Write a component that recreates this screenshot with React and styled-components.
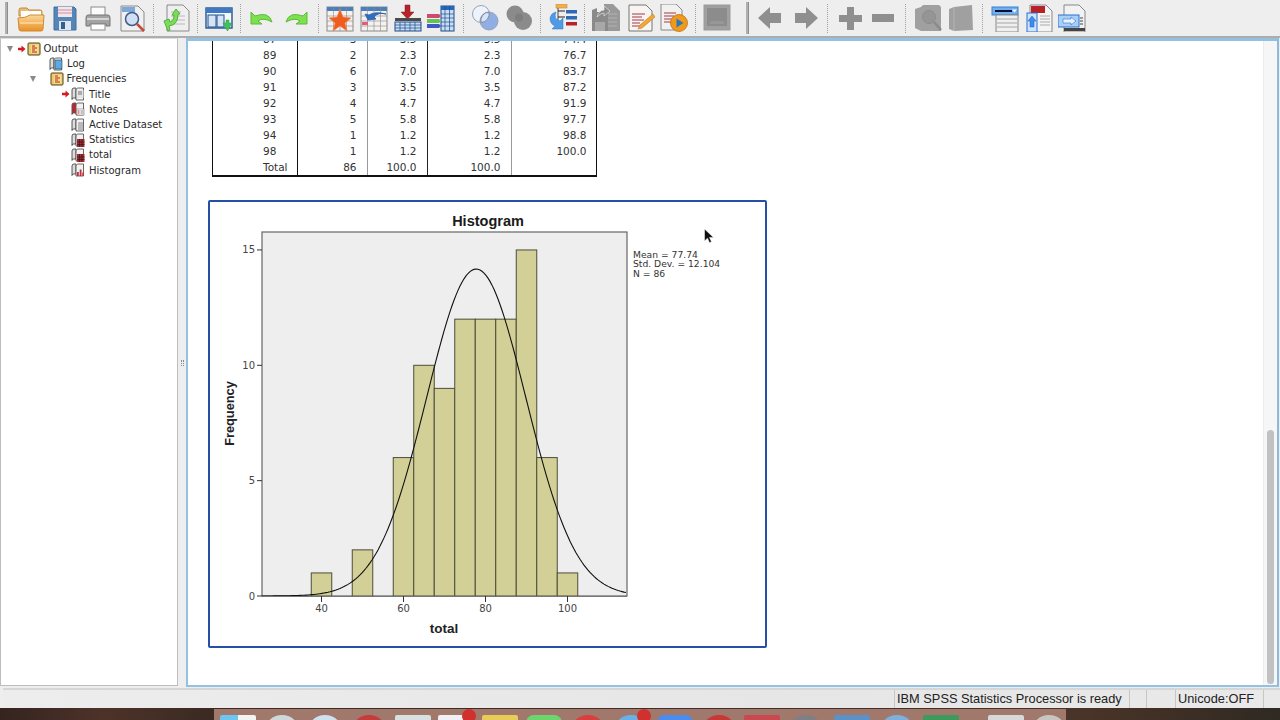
import React from "react";
import styled, { createGlobalStyle } from "styled-components";

const Global = createGlobalStyle`
  html, body { margin: 0; padding: 0; background: #eee; overflow: hidden; }
  * { box-sizing: border-box; }
`;

const Page = styled.div`
  width: 1280px; height: 720px; display: flex; flex-direction: column; overflow: hidden;
  background: #eeeeee; position: relative; font-family: "DejaVu Sans", sans-serif;
`;
const Toolbar = styled.div`
  height: 38px; flex: none; display: flex; align-items: center; background: #eeeeee;
  border-bottom: 2px solid #adadad;
`;
const ToolSlot = styled.div`
  width: 28px; height: 28px; flex: none; margin-left: ${p => p.$gap}px; margin-top: 0;
  svg { display: block; }
`;
const ToolSep = styled.div`
  width: 1px; height: 29px; flex: none; margin-left: ${p => p.$gap}px;
  border-left: 1px dotted #a2a2a2;
`;
const ToolBarGrip = styled.div`
  width: 3px; height: 32px; flex: none; margin-left: ${p => p.$gap}px;
  background: #b0b0b0; border-right: 1px solid #8e8e8e;
`;
const Main = styled.div`flex: 1; min-height: 0; display: flex; align-items: stretch;`;
const Sidebar = styled.div`
  width: 178px; flex: none; background: #fff; border: 1px solid #bdbdbd; border-top-color: #ddd;
  margin-bottom: 2px; padding-top: 2px;
`;
const Splitter = styled.div`
  width: 8px; flex: none; display: flex; align-items: center; justify-content: center;
`;
const SplitDots = styled.div`
  width: 3px; height: 6px; border-left: 1px dotted #888; border-right: 1px dotted #888;
`;
const TreeRow = styled.div`
  height: 15.2px; display: flex; align-items: center; padding-left: ${p => p.$indent}px;
  font-size: 10px; color: #2a2a2a; white-space: nowrap;
`;
const Expander = styled.div`
  width: 11px; flex: none;
  &::before {
    content: ""; display: block; width: 0; height: 0;
    border-left: 3.5px solid transparent; border-right: 3.5px solid transparent; border-top: 6px solid #8a8a8a;
  }
`;
const Marker = styled.div`
  width: 9px; height: 8px; flex: none; svg { display: block; }
`;
const TreeIcon = styled.div`
  width: 14px; height: 14px; flex: none; margin-right: ${p => p.$tight ? 2.5 : 4}px; svg { display: block; }
`;
const Viewer = styled.div`
  flex: 1; min-width: 0; display: flex; background: #fff; border: 2px solid #93c1e2; border-top-width: 3px;
  margin: 0 1px 1px 0; border-right-color: #8db9dc;
`;
const Scroller = styled.div`
  flex: 1; min-width: 0; overflow: hidden; display: flex; flex-direction: column; justify-content: flex-end;
  padding: 0 0 37px 20px; align-items: flex-start;
`;
const ScrollTrack = styled.div`
  width: 14px; flex: none; background: #f6f6f6; border-left: 1px solid #ececec; display: flex;
  justify-content: center; align-items: flex-end; padding-bottom: 1px;
`;
const ScrollThumb = styled.div`
  width: 7px; height: 254px; background: #c1c1c1; border-radius: 4px;
`;
const FreqTable = styled.table`
  border-collapse: separate; border-spacing: 0; margin: 0 0 23px 4px; table-layout: fixed; width: 384.5px;
  border: solid #111; border-width: 0 1.5px 2px 1.5px; font-size: 10.5px; color: #333; flex: none;
  col:nth-child(1) { width: 84.5px; }
  col:nth-child(2) { width: 70px; }
  col:nth-child(3) { width: 60px; }
  col:nth-child(4) { width: 84px; }
`;
const Cell = styled.td`
  height: 16px; padding: 0 10px 0 0; text-align: right; line-height: 16px; white-space: nowrap;
  &:first-child { text-align: left; padding: 0 0 0 50px; border-right: 1.5px solid #111; }
  &:nth-child(2) { border-right: 1.5px solid #999; }
  &:nth-child(3) { border-right: 1px solid #222; }
  &:nth-child(4) { border-right: 1.5px solid #999; }
  &:last-child { padding-right: 9px; }
`;
const ChartFrame = styled.div`
  width: 559px; height: 448px; flex: none; border: 2px solid #2550a6; border-radius: 2px; background: #fff;
  svg { display: block; }
`;
const StatusBar = styled.div`
  height: 21px; flex: none; display: flex; justify-content: flex-end; margin-left: 3px;
  background: linear-gradient(90deg, #ededed, #e6e6e6 60%, #e9e9e9);
  border-top: 2px solid #d6d6d6; border-bottom: 1px solid #f4f4f4;
  font-family: "Liberation Sans", sans-serif; font-size: 12.8px; color: #222;
`;
const StatusCell = styled.div`
  width: ${p => p.$w}px; flex: none; border-left: 1px solid #c6c6c6; padding-left: 2px; line-height: 18px;
  white-space: nowrap; overflow: hidden;
`;
const Desktop = styled.div`
  height: 12px; flex: none; margin-top: -1px; padding: 1px 214px 0; display: flex; overflow: hidden;
  background: linear-gradient(90deg, #35241f, #4d3229 8%, #3a2a22 17%, #4a3328 85%, #2f2a22);
`;
const Dock = styled.div`
  flex: 1; display: flex; background: #a0786c; padding: 6px 0 0 6px; gap: 7.7px; overflow: hidden;
`;
const DockIcon = styled.div`
  width: 36px; height: 36px; flex: none; background: ${p => p.$bg}; margin-left: ${p => p.$ml || 0}px;
  border-radius: ${p => p.$radius}; ${p => p.$ring ? `border: 5px solid ${p.$ring};` : ""}
  position: relative;
`;
const DockBadge = styled.div`
  position: absolute; right: -2px; top: -6px; width: 14px; height: 14px; border-radius: 50%; background: #d0312f;
`;
const Cursor = styled.svg`
  position: absolute; left: 703px; top: 228px; width: 11px; height: 16px;
`;

const Sv = ({ children }) => <svg width="28" height="28" viewBox="0 0 28 28">{children}</svg>;
const Doc = ({ x = 6, y = 2, w = 18, h = 24, fill = "#fff", st = "#8a8a8a" }) => (
  <path d={`M${x} ${y}h${w - 6}l6 6v${h - 6}h${-w}z`} fill={fill} stroke={st} />
);

const IconOpen = () => (<Sv>
  <defs><linearGradient id="og" x1="0" y1="0" x2="0" y2="1"><stop offset="0" stopColor="#fbd89a" /><stop offset="1" stopColor="#ea8f24" /></linearGradient></defs>
  <path d="M2 6q0-2 2-2h6l2 2h11q2 0 2 2v4H2z" fill="#e9bd72" stroke="#c18a3c" />
  <rect x="4" y="7" width="20" height="7" fill="#fff" />
  <path d="M1 14q8 0 12-3h14l-1 14q0 2-2 2H4q-2 0-2-2z" fill="url(#og)" stroke="#cd8a32" />
  <path d="M3 19h23" stroke="#fff0cc" strokeWidth="1.2" opacity=".8" />
</Sv>);
const IconSave = () => (<Sv>
  <path d="M3 3h20l2 2v21H3z" fill="#5486b7" stroke="#3f6e9f" />
  <rect x="7" y="3" width="14" height="10" fill="#f1e6ea" />
  <path d="M7 6h14M7 9h14" stroke="#d98aa0" />
  <rect x="8" y="17" width="12" height="9" fill="#dde6ef" />
  <rect x="10" y="18" width="4" height="7" fill="#33618f" />
</Sv>);
const IconPrint = () => (<Sv>
  <rect x="7" y="3" width="14" height="9" fill="#fbfbfb" stroke="#8b8b8b" />
  <path d="M4 11h20q2 0 2 3v8h-4v-2H6v2H2v-8q0-3 2-3z" fill="#a3a3a3" stroke="#777" />
  <rect x="3" y="14" width="22" height="2" fill="#d5d5d5" />
  <rect x="7" y="20" width="14" height="6" fill="#fff" stroke="#8b8b8b" />
</Sv>);
const IconPreview = () => (<Sv>
  <Doc x={2} y={2} w={23} h={25} fill="#f0f0f0" />
  <rect x="3" y="3" width="13" height="5" fill="#7ea8d8" />
  <circle cx="13" cy="15" r="6.5" fill="#cfe0f4" stroke="#40598a" strokeWidth="1.5" />
  <path d="M18 20l7 7" stroke="#c94a3c" strokeWidth="2.5" />
</Sv>);
const IconGoto = () => (<Sv>
  <Doc x={5} y={1} w={22} h={26} fill="#efefef" />
  <path d="M9 8h10M9 12h14M9 16h14M9 20h14" stroke="#bbb" />
  <path d="M2 17l5-2 1 3q4-1 4-7h-2l4-6 4 5h-2q0 11-9 12l1 4-2 1z" fill="#7fdc5a" stroke="#4fb23a" />
</Sv>);
const IconVars = () => (<Sv>
  <rect x="1" y="4" width="26" height="20" fill="#f4f8fc" stroke="#26548e" strokeWidth="1.4" />
  <rect x="1" y="4" width="26" height="5" fill="#3e79c1" />
  <rect x="3" y="11" width="8" height="12" fill="#d5e5f6" stroke="#1f4f8e" />
  <rect x="12" y="11" width="7" height="12" fill="#d5e5f6" stroke="#1f4f8e" />
  <path d="M19 19h3v-3h3v3h3l-4.500 8z" transform="translate(-1 0)" fill="#3fc25a" stroke="#2a9a42" strokeWidth=".5" />
</Sv>);
const IconUndo = () => (<Sv>
  <path d="M3 12v11h11l-4-3q5-4 14 1q-3-11-17-6l-4-4z" transform="translate(0 -3)" fill="#7fe04f" stroke="#5cba3d" />
</Sv>);
const IconRedo = () => (<Sv>
  <path d="M25 12v11H14l4-3q-5-4-14 1q3-11 17-6l4-4z" transform="translate(0 -3)" fill="#7fe04f" stroke="#5cba3d" />
</Sv>);
const Grid = ({ x = 1, y = 3, w = 26, h = 24, head = "#4a7fbe", line = "#8a8a8a" }) => (<g>
  <rect x={x} y={y} width={w} height={h} fill="#f4f1ee" stroke={line} />
  <rect x={x} y={y} width={w} height={4} fill={head} />
  {[1, 2, 3].map(i => <path key={i} d={`M${x + i * w / 4} ${y}v${h}`} stroke={line} strokeWidth=".6" />)}
  {[1, 2, 3].map(i => <path key={i} d={`M${x} ${y + 4 + i * (h - 4) / 4}h${w}`} stroke={line} strokeWidth=".6" />)}
</g>);
const IconStar = () => (<Sv>
  <Grid />
  <path d="M14 5l3 8 8 1-6 5 2 8-7-5-7 5 2-8-6-5 8-1z" fill="#ef5c1c" stroke="#ee8a55" strokeWidth=".6" />
</Sv>);
const IconCase = () => (<Sv>
  <Grid />
  <rect x="2" y="18" width="6" height="3" fill="#e65a80" />
  <path d="M8 16l-3-6 4 1q6-4 17-1q-8-2-12 3l2 2z" fill="#2e6fc4" stroke="#2e5e9e" strokeWidth=".8" />
</Sv>);
const IconInsert = () => (<Sv>
  <path d="M11 1h5v7h4l-6.500 7-6.500-7h4z" fill="#b5222a" stroke="#8e1c20" strokeWidth=".5" />
  <rect x="1" y="14" width="26" height="3" fill="#4a4a4a" />
  <rect x="1" y="18" width="26" height="9" fill="#c7dcf2" stroke="#1e4a8c" />
  <path d="M1 21h26M1 24h26M6 18v9M11 18v9M16 18v9M21 18v9" stroke="#1e4a8c" strokeWidth=".7" />
</Sv>);
const IconSelect = () => (<Sv>
  <rect x="14" y="2" width="13" height="25" fill="#c9def3" stroke="#1e4a8c" />
  <rect x="14" y="2" width="13" height="4" fill="#2a66ba" />
  <path d="M14 10h13M14 14h13M14 18h13M14 22h13M18 2v25M22.500 2v25" stroke="#1e4a8c" strokeWidth=".7" />
  <path d="M0 10h12l2 2-2 2H0z" fill="#d04a70" />
  <path d="M0 15h12l2 2-2 2H0z" fill="#63c455" />
  <path d="M0 20h12l2 2-2 2H0z" fill="#3f58c4" />
</Sv>);
const IconCircles = () => (<Sv>
  <circle cx="10" cy="10" r="8.500" fill="#eef2fa" stroke="#98a5b8" />
  <circle cx="18" cy="17" r="9" fill="#90aee4" stroke="#98a5b8" />
  <path d="M10 18.500a8.500 8.500 0 0 1 8-10.400a8.500 8.500 0 0 1-8 10.400z" fill="#d9e3f6" stroke="#7a8aa0" />
</Sv>);
const IconCirclesGray = () => (<Sv>
  <circle cx="10" cy="10" r="8.500" fill="#8b8b8b" />
  <circle cx="18" cy="17" r="9" fill="#8b8b8b" />
  <circle cx="14" cy="13.500" r="4" fill="#7e7e7e" />
</Sv>);
const IconTree = () => (<Sv>
  <rect x="7" y="0" width="11" height="4" fill="#f0b050" stroke="#cc8a30" strokeWidth=".6" />
  <path d="M9 4v14" stroke="#444" />
  <rect x="17" y="6" width="11" height="3.500" fill="#2f6bb5" />
  <rect x="17" y="12" width="11" height="3.500" fill="#2f6bb5" />
  <rect x="17" y="18" width="11" height="3.500" fill="#b5222a" />
  <path d="M9 7h7M9 13h7" stroke="#222" strokeWidth="1.200" />
  <path d="M1 14q1-5 6-6q-3 7 4 9l3-3v11h-11l3-3q-5-2-5-8z" fill="#4d9be6" stroke="#2f77c0" strokeWidth=".5" />
</Sv>);
const IconGrayFiles = () => (<Sv>
  <path d="M12 0h9l7 7v20H12z" fill="#999" />
  <path d="M16 10h9M16 14h9M16 18h9M16 22h9" stroke="#b2b2b2" />
  <path d="M0 6l5-2v4l-1 0h12v19H0z" fill="#8a8a8a" />
  <path d="M3 18h10v9H3z" fill="#a8a8a8" />
  <path d="M5 13q2-7 7-7V2l6 5-6 5V9q-3 0-7 4z" fill="#8a8a8a" stroke="#eee" strokeWidth=".6" />
</Sv>);
const IconDocPencil = () => (<Sv>
  <Doc x={2} y={1} w={23} h={26} fill="#f7f4f2" st="#777" />
  <path d="M5 10h13M5 13h10M5 16h12M5 19h8M5 22h11" stroke="#a83a48" strokeWidth="1.100" />
  <path d="M26 10l-13 11-2 4 4-1 13-11z" fill="#f0a838" stroke="#bd7a1c" strokeWidth=".6" />
</Sv>);
const IconDocPlay = () => (<Sv>
  <Doc x={1} y={0} w={21} h={26} fill="#f1f1f1" st="#888" />
  <path d="M4 9h12M4 12h10M4 15h8M4 18h7" stroke="#a83a48" strokeWidth="1.100" />
  <circle cx="19" cy="19" r="8.500" fill="#ef9a1a" stroke="#bf6f10" strokeWidth=".8" />
  <path d="M16.500 14.500l7 4.500-7 4.500z" fill="#2a79c0" />
</Sv>);
const IconScreen = () => (<Sv>
  <rect x="1" y="1" width="26" height="25" fill="#a0a0a0" stroke="#9a9a9a" />
  <rect x="4" y="4" width="20" height="18" fill="#8c8c8c" />
  <path d="M6 20h16l-2-3h-12z" fill="#979797" />
</Sv>);
const IconLeft = () => (<Sv><path d="M1 18L13 7v6h11v10H13v6z" transform="translate(0 -4)" fill="#8f8f8f" /></Sv>);
const IconRight = () => (<Sv><path d="M27 18L15 7v6H4v10h11v6z" transform="translate(0 -4)" fill="#8f8f8f" /></Sv>);
const IconPlus = () => (<Sv><path d="M11 3h7v8h8v7h-8v8h-7v-8H3v-7h8z" fill="#8f8f8f" /></Sv>);
const IconMinus = () => (<Sv><rect x="3" y="10" width="22" height="8" fill="#8f8f8f" /></Sv>);
const IconCam = () => (<Sv>
  <path d="M1 5l6-2 2-2h16l2 2v24H7l-6-3z" fill="#a0a0a0" />
  <circle cx="15" cy="13" r="6.500" fill="#959595" stroke="#8c8c8c" />
  <path d="M20 18l7 8" stroke="#8a8a8a" strokeWidth="2.500" />
</Sv>);
const IconBox = () => (<Sv>
  <path d="M2 5l5-2 18-2 1 25-19 1-5-2z" fill="#a0a0a0" />
  <path d="M7 3v24" stroke="#b4b4b4" />
</Sv>);
const IconPane = () => (<Sv>
  <rect x="1" y="3" width="26" height="8" fill="#6fb0ef" stroke="#3b7fd0" />
  <path d="M4 7h17" stroke="#0a0a3a" strokeWidth="2" />
  <path d="M21 5.500h5l-2.500 3z" fill="#fff" />
  <rect x="5" y="11" width="22" height="17" fill="#efefef" stroke="#888" />
  <path d="M6 15h20M6 19h20M6 23h20" stroke="#a5a5a5" />
</Sv>);
const IconPromote = () => (<Sv>
  <Doc x={4} y={1} w={22} h={27} fill="#f4f4f4" st="#888" />
  <rect x="5" y="2" width="14" height="7" fill="#b8202a" />
  <path d="M14 12h10M14 15h10M14 18h10M14 21h10" stroke="#aaa" />
  <rect x="1" y="9" width="10" height="19" fill="#cfe3fb" stroke="#2d6fd0" />
  <path d="M6 12l4 5H8v6H4v-6H2z" fill="#3d8cf0" stroke="#1c5fb8" strokeWidth=".5" />
</Sv>);
const IconDemote = () => (<Sv>
  <Doc x={6} y={1} w={21} h={27} fill="#f2f2f2" st="#888" />
  <path d="M22 14h3M22 17h3M22 20h3" stroke="#444" />
  <rect x="0" y="11" width="21" height="12" fill="#a8d0f6" stroke="#2d6fd0" />
  <path d="M5 15h8v-2l5 4-5 4v-2H5z" fill="#e9f3ff" stroke="#2d6fd0" strokeWidth=".6" />
  <rect x="6" y="24" width="21" height="3" fill="#444" />
</Sv>);

const tools = [
  { at: 6, kind: "grip" },
  { at: 31, Icon: IconOpen }, { at: 65, Icon: IconSave }, { at: 98, Icon: IconPrint }, { at: 133, Icon: IconPreview },
  { at: 153, kind: "sep" }, { at: 176, Icon: IconGoto }, { at: 197, kind: "sep" }, { at: 219, Icon: IconVars },
  { at: 240, kind: "sep" }, { at: 262, Icon: IconUndo }, { at: 296, Icon: IconRedo }, { at: 318, kind: "sep" },
  { at: 340, Icon: IconStar }, { at: 374, Icon: IconCase }, { at: 408, Icon: IconInsert }, { at: 441, Icon: IconSelect },
  { at: 463, kind: "sep" }, { at: 485, Icon: IconCircles }, { at: 519, Icon: IconCirclesGray }, { at: 540, kind: "sep" },
  { at: 563, Icon: IconTree }, { at: 584, kind: "sep" }, { at: 606, Icon: IconGrayFiles }, { at: 641, Icon: IconDocPencil },
  { at: 674, Icon: IconDocPlay }, { at: 695, kind: "sep" }, { at: 717, Icon: IconScreen }, { at: 747.5, kind: "grip" },
  { at: 771, Icon: IconLeft }, { at: 805, Icon: IconRight }, { at: 827, kind: "sep" }, { at: 850, Icon: IconPlus },
  { at: 883, Icon: IconMinus }, { at: 905, kind: "sep" }, { at: 928, Icon: IconCam }, { at: 961, Icon: IconBox },
  { at: 982, kind: "sep" }, { at: 1005, Icon: IconPane }, { at: 1040, Icon: IconPromote }, { at: 1072, Icon: IconDemote },
];

const Tools = () => {
  let cursor = 0;
  return tools.map((t, i) => {
    const w = t.Icon ? 28 : t.kind === "grip" ? 3 : 1;
    const gap = t.at - w / 2 - cursor;
    cursor = t.at + w / 2;
    if (t.kind === "grip") return <ToolBarGrip key={i} $gap={gap} />;
    if (t.kind === "sep") return <ToolSep key={i} $gap={gap} />;
    return <ToolSlot key={i} $gap={gap}><t.Icon /></ToolSlot>;
  });
};

const RedArrow = () => (
  <svg width="8" height="8" viewBox="0 0 8 8"><path d="M0 2.800h3.500V0.500L7.500 4 3.500 7.500V5.200H0z" fill="#d41a22" /></svg>
);
const OutlineIcon = () => (
  <svg width="14" height="14" viewBox="0 0 14 14">
    <rect x="1" y="1" width="12" height="12" rx="1" fill="#e8cc6a" stroke="#54401a" />
    <rect x="4" y="2.500" width="7.500" height="9" fill="#f3dd8e" />
    <path d="M5 4h3M5 6h5M5 8h3M5 10h5" stroke="#c42020" />
  </svg>
);
const BookBase = ({ children }) => (
  <svg width="14" height="14" viewBox="0 0 14 14">
    <path d="M1 3q0-2 2-2h2v10H2.500Q1 11 1 12.500z" fill="#ddd" stroke="#333" strokeWidth=".8" />
    <path d="M5 2.500q1.500-2 3-1.500h4.500v12H5z" fill="#f2f2f2" stroke="#444" strokeWidth=".8" />
    {children}
  </svg>
);
const LogIcon = () => (<BookBase><rect x="6" y="3" width="7" height="9" fill="#5ea9e0" stroke="#245" strokeWidth=".6" /></BookBase>);
const TitleIcon = () => (<BookBase><rect x="6" y="3" width="6.500" height="8" fill="#e6e6e6" /><path d="M7 5h4M7 7h4" stroke="#555" strokeWidth=".8" /></BookBase>);
const NotesIcon = () => (<BookBase><path d="M1 3q0-2 2-2h2v10H1z" fill="#a8323c" /><rect x="6" y="7" width="7" height="6" fill="#fff" stroke="#666" strokeWidth=".5" /><path d="M7 9h1.500M7 11h1.500" stroke="#c11" /><path d="M9.500 9h3M9.500 11h3" stroke="#555" strokeWidth=".7" /></BookBase>);
const DatasetIcon = () => (<BookBase><path d="M7 5h5M7 7h5M7 9h5M7 11h5" stroke="#666" strokeWidth=".8" /></BookBase>);
const TableIcon = () => (<BookBase><rect x="6" y="6" width="7.500" height="8" fill="#b3262c" /><path d="M8.500 6v8M11 6v8M6 9h7.500M6 11.500h7.500" stroke="#222" strokeWidth=".7" /></BookBase>);
const ChartIcon = () => (<BookBase><path d="M6 13V9h1.800v4zM8.700 13V6.500h1.800V13zM11.300 13V9.500h1.700V13z" fill="#c0303a" /></BookBase>);

const treeRows = [
  { label: "Output", indent: 6, exp: true, mark: true, tight: true, Icon: OutlineIcon },
  { label: "Log", indent: 48, Icon: LogIcon },
  { label: "Frequencies", indent: 29, exp: true, spacer: true, tight: true, Icon: OutlineIcon },
  { label: "Title", indent: 61, mark: true, Icon: TitleIcon },
  { label: "Notes", indent: 70, Icon: NotesIcon },
  { label: "Active Dataset", indent: 70, Icon: DatasetIcon },
  { label: "Statistics", indent: 70, Icon: TableIcon },
  { label: "total", indent: 70, Icon: TableIcon },
  { label: "Histogram", indent: 70, Icon: ChartIcon },
];

const tableRows = [
  ["87", "3", "3.5", "3.5", "74.4"], ["89", "2", "2.3", "2.3", "76.7"], ["90", "6", "7.0", "7.0", "83.7"],
  ["91", "3", "3.5", "3.5", "87.2"], ["92", "4", "4.7", "4.7", "91.9"], ["93", "5", "5.8", "5.8", "97.7"],
  ["94", "1", "1.2", "1.2", "98.8"], ["98", "1", "1.2", "1.2", "100.0"], ["Total", "86", "100.0", "100.0", ""],
];

const X = v => 321.5 + (v - 40) * 4.1;
const Y = f => 596 - f * 23.07;
const bins = [[37.5, 1], [47.5, 2], [57.5, 6], [62.5, 10], [67.5, 9], [72.5, 12], [77.5, 12], [82.5, 12], [87.5, 15], [92.5, 6], [97.5, 1]];
const curve = (() => {
  const pts = [];
  for (let px = 262; px <= 627; px += 2) {
    const v = 40 + (px - 321.5) / 4.1;
    const z = (v - 77.74) / 12.104;
    const f = (86 * 5) / (12.104 * Math.sqrt(2 * Math.PI)) * Math.exp(-z * z / 2);
    pts.push(`${px},${Y(f).toFixed(2)}`);
  }
  return pts.join(" ");
})();

const Histogram = () => (
  <svg width="555" height="444" viewBox="210 202 555 444">
    <text x="488" y="226" textAnchor="middle" fontFamily="Liberation Sans" fontWeight="700" fontSize="14.500" fill="#1a1a1a">Histogram</text>
    <rect x="262" y="232" width="365" height="364" fill="#eeeeef" stroke="#666" strokeWidth="1.200" />
    {bins.map(([s, n]) => (
      <rect key={s} x={X(s)} y={Y(n)} width={20.5} height={596 - Y(n)} fill="#d2d097" stroke="#4c4c38" strokeWidth="1" />
    ))}
    <polyline points={curve} fill="none" stroke="#111" strokeWidth="1.100" />
    <path d="M262 596.500H627" stroke="#777" strokeWidth="1.200" />
    {[0, 5, 10, 15].map(f => (
      <g key={f}>
        <path d={`M257 ${Y(f)}h5`} stroke="#333" />
        <text x="255" y={Y(f) + 3.500} textAnchor="end" fontFamily="DejaVu Sans" fontSize="10" fill="#444">{f}</text>
      </g>
    ))}
    {[40, 60, 80, 100].map(v => (
      <g key={v}>
        <path d={`M${X(v)} 596v6`} stroke="#333" />
        <text x={X(v)} y="611.500" textAnchor="middle" fontFamily="DejaVu Sans" fontSize="10" fill="#444">{v}</text>
      </g>
    ))}
    <text transform="translate(234 413.500) rotate(-90)" textAnchor="middle" fontFamily="Liberation Sans" fontWeight="700" fontSize="12.800" fill="#222">Frequency</text>
    <text x="444" y="633" textAnchor="middle" fontFamily="Liberation Sans" fontWeight="700" fontSize="13.500" fill="#222">total</text>
    <g fontFamily="DejaVu Sans" fontSize="9.200" fill="#333">
      <text x="633" y="257.500">Mean = 77.74</text>
      <text x="633" y="267">Std. Dev. = 12.104</text>
      <text x="633" y="276.500">N = 86</text>
    </g>
  </svg>
);

const dock = [
  { bg: "linear-gradient(90deg,#6ec6ee 50%,#f3f3f3 50%)", radius: "2px" },
  { bg: "#cfd8d8", radius: "50%" },
  { bg: "#5a94dc", radius: "50%", ring: "#cfe0ee" },
  { bg: "#c43c3c", radius: "50%" },
  { bg: "#d8e0e2", radius: "2px" },
  { bg: "#f0f0f4", radius: "2px", badge: true },
  { bg: "#e8cc58", radius: "2px" },
  { bg: "#6cd66c", radius: "8px" },
  { bg: "#f0f0f0", radius: "50%", ring: "#d84040" },
  { bg: "#6ab0e8", radius: "50%", badge: true },
  { bg: "#4a8cf0", radius: "8px" },
  { bg: "#f4f4f4", radius: "50%", ring: "#c83838" },
  { bg: "#c84a50", radius: "2px" },
  { bg: "#7f7f86", radius: "50%" },
  { bg: "#5a92c8", radius: "2px", ml: 2 },
  { bg: "#7fb0dc", radius: "50%", ml: 2 },
  { bg: "#3d9a5c", radius: "2px" },
  { bg: "#d8d8d8", radius: "2px", ml: 21 },
  { bg: "#c8c4c0", radius: "50%" },
];

export default function App() {
  return (
    <Page>
      <Global />
      <Toolbar><Tools /></Toolbar>
      <Main>
        <Sidebar>
          {treeRows.map(r => (
            <TreeRow key={r.label} $indent={r.indent}>
              {r.exp && <Expander />}
              {(r.mark || r.spacer) && <Marker>{r.mark && <RedArrow />}</Marker>}
              <TreeIcon $tight={r.tight}><r.Icon /></TreeIcon>
              {r.label}
            </TreeRow>
          ))}
        </Sidebar>
        <Splitter><SplitDots /></Splitter>
        <Viewer>
          <Scroller>
            <FreqTable>
              <colgroup><col /><col /><col /><col /><col /></colgroup>
              <tbody>
                {tableRows.map(row => (
                  <tr key={row[0]}>{row.map((c, i) => <Cell key={i}>{c}</Cell>)}</tr>
                ))}
              </tbody>
            </FreqTable>
            <ChartFrame><Histogram /></ChartFrame>
          </Scroller>
          <ScrollTrack><ScrollThumb /></ScrollTrack>
        </Viewer>
      </Main>
      <StatusBar>
        <StatusCell $w={235}>IBM SPSS Statistics Processor is ready</StatusCell>
        <StatusCell $w={17} />
        <StatusCell $w={29} />
        <StatusCell $w={88}>Unicode:OFF</StatusCell>
        <StatusCell $w={17} />
      </StatusBar>
      <Desktop>
        <Dock>
          {dock.map((d, i) => (
            <DockIcon key={i} $bg={d.bg} $radius={d.radius} $ring={d.ring} $ml={d.ml}>
              {d.badge && <DockBadge />}
            </DockIcon>
          ))}
        </Dock>
      </Desktop>
      <Cursor viewBox="0 0 11 16"><path d="M1.500 1v12l3-2.800 2 4.500 2-1-2-4.300h4z" fill="#111" stroke="#fff" strokeWidth=".5" /></Cursor>
    </Page>
  );
}
